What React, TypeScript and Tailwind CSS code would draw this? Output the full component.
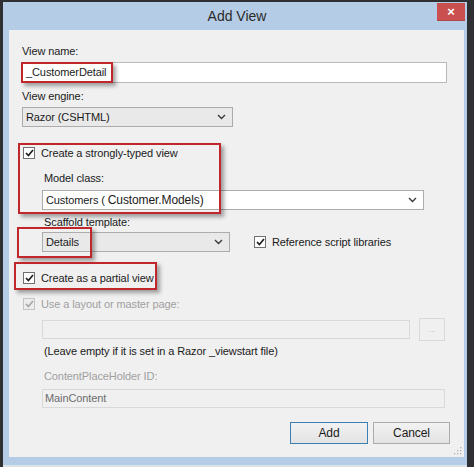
import React from 'react';

const font = { fontFamily: '"Liberation Sans", Arial, sans-serif' };

function Chevron() {
  return (
    <svg width="9" height="6" viewBox="0 0 9 6" className="shrink-0">
      <path d="M1 1 L4.5 4.5 L8 1" fill="none" stroke="#3a3a3a" strokeWidth="1.4" />
    </svg>
  );
}

function Check({ disabled = false }: { disabled?: boolean }) {
  return (
    <span
      className={
        'flex h-[12px] w-[12px] shrink-0 items-center justify-center border ' +
        (disabled ? 'border-[#c4c4c4] bg-[#ececec]' : 'border-[#707070] bg-white')
      }
    >
      <svg width="9" height="8" viewBox="0 0 9 8">
        <path
          d="M1 4 L3.4 6.5 L8 1"
          fill="none"
          stroke={disabled ? '#a8a8a8' : '#1e1e1e'}
          strokeWidth="1.7"
        />
      </svg>
    </span>
  );
}

function Select({ value, className, white = false }: { value: React.ReactNode; className: string; white?: boolean }) {
  return (
    <div
      className={
        'flex h-[20px] items-center justify-between border border-[#acacac] pl-[3px] pr-[6px] text-[#1a1a1a] ' +
        (white ? 'bg-white' : 'bg-[#e9e9e9]') +
        ' ' +
        className
      }
    >
      <span>{value}</span>
      <Chevron />
    </div>
  );
}

function Note({ className }: { className: string }) {
  return (
    <div
      className={
        'pointer-events-none absolute border-2 border-[#c1262c] shadow-[3px_3px_4px_rgba(0,0,0,0.35)] ' + className
      }
    />
  );
}

export default function App() {
  return (
    <div className="flex h-[467px] w-[474px] flex-col bg-[#2f3033]" style={font}>
      <div className="ml-[3px] mr-[7px] mt-[2px] flex h-[463px] flex-col bg-[#b5cce6] pb-[8px] pl-[6px] pr-[2px]">
        {/* title bar */}
        <div className="flex h-[28px] shrink-0 items-start">
          <div className="w-[28px] flex-none" />
          <div className="flex h-[28px] flex-1 items-center justify-center text-[14px] text-[#2b2b2b]">Add View</div>
          <div className="mt-[1px] flex h-[18px] w-[28px] min-w-[28px] flex-none items-center justify-center border-b border-[#b04545] bg-[#c9504f] text-[13px] font-bold leading-none text-white">
            ×
          </div>
        </div>

        {/* client area */}
        <div className="relative mr-[1px] flex flex-1 flex-col bg-[#f0f0f0] pl-[13px] pr-[14px] pt-[13px] text-[11px] tracking-[-0.1px] text-[#1a1a1a]">
          <div className="h-4 leading-4">View name:</div>
          <div className="mt-[3px] flex h-[21px] w-[425px] items-center border border-[#b9b9b9] bg-white pl-[3px]">
            _CustomerDetail
          </div>
          <div className="mt-[5px] h-4 leading-4">View engine:</div>
          <Select value="Razor (CSHTML)" className="mt-[3px] w-[211px]" />

          <div className="mt-[18px] flex h-4 items-center gap-[6px] pl-[1px]">
            <Check />
            <span>Create a strongly-typed view</span>
          </div>
          <div className="ml-[22px] mt-[9px] h-4 leading-4">Model class:</div>
          <Select
            value={
              <>
                Customers ( <span className="text-[12px]">Customer.Models)</span>
              </>
            }
            white
            className="ml-[20px] mt-[4px] w-[382px]"
          />
          <div className="ml-[22px] mt-[4px] h-4 leading-4">Scaffold template:</div>
          <div className="mt-[2px] flex h-[20px] items-center">
            <Select value="Details" className="ml-[20px] w-[188px]" />
            <div className="ml-[24px] flex items-center gap-[6px]">
              <Check />
              <span>Reference script libraries</span>
            </div>
          </div>

          <div className="mt-[18px] flex h-4 items-center gap-[6px] pl-[1px]">
            <Check />
            <span>Create as a partial view</span>
          </div>
          <div className="mt-[10px] flex h-4 items-center gap-[6px] pl-[1px] text-[#a0a0a0]">
            <Check disabled />
            <span>Use a layout or master page:</span>
          </div>
          <div className="mt-[6px] flex h-[23px] items-center">
            <div className="ml-[20px] h-[19px] w-[368px] border border-[#d9d9d9] bg-[#f0f0f0]" />
            <div className="ml-[9px] flex h-[23px] w-[26px] items-center justify-center border border-[#d9d9d9] bg-[#f0f0f0] text-[8px] text-[#b5b5b5]">
              ...
            </div>
          </div>
          <div className="ml-[22px] mt-[2px] h-4 leading-4">(Leave empty if it is set in a Razor _viewstart file)</div>
          <div className="ml-[22px] mt-[9px] h-4 leading-4 text-[#a0a0a0]">ContentPlaceHolder ID:</div>
          <div className="ml-[20px] mt-[5px] flex h-[19px] w-[403px] items-center border border-[#d9d9d9] bg-[#f0f0f0] pl-[2px] text-[#6d6d6d]">
            MainContent
          </div>

          <div className="mt-[14px] flex justify-end gap-[5px]">
            <div className="flex h-[22px] w-[78px] items-center justify-center border border-[#3c7fb1] bg-gradient-to-b from-[#f2f2f2] to-[#e3e3e3] text-[12px]">
              Add
            </div>
            <div className="flex h-[22px] w-[77px] items-center justify-center border border-[#acacac] bg-gradient-to-b from-[#f2f2f2] to-[#e3e3e3] text-[12px]">
              Cancel
            </div>
          </div>

          {/* resize grip */}
          <svg className="absolute bottom-[2px] right-[2px]" width="8" height="8" viewBox="0 0 8 8">
            <rect x="6" y="0" width="1.3" height="1.3" fill="#b0b0b0" />
            <rect x="3" y="3" width="1.3" height="1.3" fill="#b0b0b0" />
            <rect x="6" y="3" width="1.3" height="1.3" fill="#b0b0b0" />
            <rect x="0" y="6" width="1.3" height="1.3" fill="#b0b0b0" />
            <rect x="3" y="6" width="1.3" height="1.3" fill="#b0b0b0" />
            <rect x="6" y="6" width="1.3" height="1.3" fill="#b0b0b0" />
          </svg>

          {/* red annotation boxes */}
          <Note className="left-[12px] top-[32px] h-[21px] w-[92px]" />
          <Note className="left-[9px] top-[113px] h-[71px] w-[203px]" />
          <Note className="left-[8px] top-[197px] h-[31px] w-[75px]" />
          <Note className="left-[5px] top-[232px] h-[28px] w-[143px]" />
        </div>
      </div>
      <div className="ml-[3px] mr-[7px] h-[2px] bg-[#dde2e8]" />
    </div>
  );
}
